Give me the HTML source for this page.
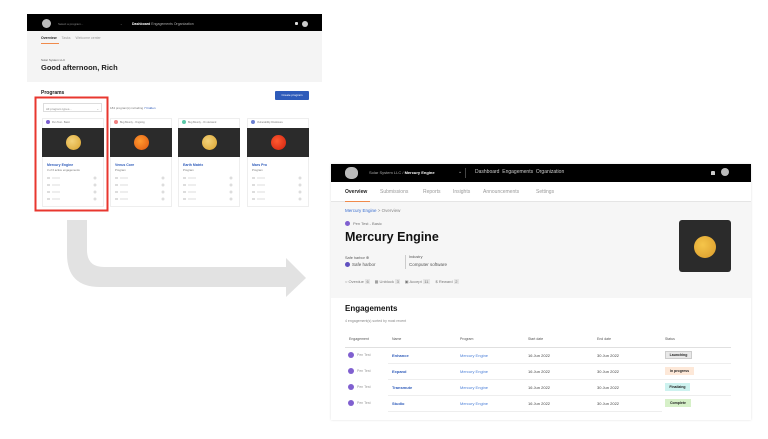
<!DOCTYPE html>
<html><head><style>
*{margin:0;padding:0;box-sizing:border-box}
body{width:768px;height:439px;background:#fff;position:relative;overflow:hidden;font-family:"Liberation Sans",sans-serif;color:#222}
.a{position:absolute;white-space:nowrap}
.t{font-size:3px;color:#777}
</style></head><body>
<div class="a" style="left:27px;top:14px;width:295px;height:200px;background:#fff"></div>
<div class="a" style="left:27px;top:14px;width:295px;height:17px;background:#000"></div>
<div class="a" style="left:42px;top:19px;width:9px;height:9px;border-radius:50%;background:#bbb"></div>
<div class="a t" style="left:58px;top:22px;color:#888">Select a program...</div>
<div class="a t" style="left:120px;top:22px;color:#888">⌄</div>
<div class="a" style="left:132px;top:22px;font-size:3.5px;color:#fff;font-weight:bold">Dashboard <span style="font-weight:normal;color:#aaa">Engagements Organization</span></div>
<div class="a" style="left:295px;top:22px;width:3px;height:3px;background:#ddd;border-radius:1px"></div>
<div class="a" style="left:302px;top:21px;width:6px;height:6px;border-radius:50%;background:#ccc"></div>
<div class="a" style="left:27px;top:31px;width:295px;height:51px;background:#f4f4f4"></div>
<div class="a" style="left:41px;top:36px;font-size:3.5px;font-weight:bold">Overview <span style="font-weight:normal;color:#999;margin-left:4px">Tasks</span><span style="font-weight:normal;color:#999;margin-left:5px">Welcome center</span></div>
<div class="a" style="left:41px;top:43px;width:18px;height:1px;background:#f08a4b"></div>
<div class="a t" style="left:41px;top:58px;color:#555">Solar System LLC</div>
<div class="a" style="left:41px;top:63px;font-size:7.5px;font-weight:bold;color:#222">Good afternoon, Rich</div>
<div class="a" style="left:41px;top:90px;font-size:5px;font-weight:bold">Programs</div>
<div class="a" style="left:275px;top:91px;width:34px;height:9px;background:#2e5bba;border-radius:1px;color:#fff;font-size:3px;text-align:center;line-height:9px">Create program</div>
<div class="a" style="left:43px;top:103px;width:59px;height:9px;border:0.5px solid #ddd;font-size:3px;color:#888;padding:3px 2px">All program types...<span style="float:right">⌄</span></div>
<div class="a t" style="left:110px;top:106px">184 program(s) including <span style="color:#2e5bba">7 hidden</span></div>

<div class="a" style="left:42px;top:118px;width:62px;height:89px;border:0.5px solid #eee"></div>
<div class="a" style="left:110px;top:118px;width:62px;height:89px;border:0.5px solid #eee"></div>
<div class="a" style="left:178px;top:118px;width:62px;height:89px;border:0.5px solid #eee"></div>
<div class="a" style="left:247px;top:118px;width:62px;height:89px;border:0.5px solid #eee"></div>

<div class="a" style="left:42px;top:128px;width:62px;height:29px;background:#2b2b2b"></div>
<div class="a" style="left:110px;top:128px;width:62px;height:29px;background:#2b2b2b"></div>
<div class="a" style="left:178px;top:128px;width:62px;height:29px;background:#2b2b2b"></div>
<div class="a" style="left:247px;top:128px;width:62px;height:29px;background:#2b2b2b"></div>
<div class="a" style="left:66px;top:135px;width:15px;height:15px;border-radius:50%;background:radial-gradient(circle at 40% 40%,#f3d27a,#d9a22d)"></div>
<div class="a" style="left:134px;top:135px;width:15px;height:15px;border-radius:50%;background:radial-gradient(circle at 40% 40%,#ff9a30,#e0560e)"></div>
<div class="a" style="left:202px;top:135px;width:15px;height:15px;border-radius:50%;background:radial-gradient(circle at 40% 40%,#f3d27a,#d9a22d)"></div>
<div class="a" style="left:271px;top:135px;width:15px;height:15px;border-radius:50%;background:radial-gradient(circle at 40% 40%,#ff5a30,#d0200e)"></div>

<div class="a" style="left:46px;top:120px;width:4px;height:4px;border-radius:50%;background:#7b5fd0"></div>
<div class="a" style="left:114px;top:120px;width:4px;height:4px;border-radius:50%;background:#f08080"></div>
<div class="a" style="left:182px;top:120px;width:4px;height:4px;border-radius:50%;background:#5cc8a8"></div>
<div class="a" style="left:251px;top:120px;width:4px;height:4px;border-radius:50%;background:#6b7fd0"></div>
<div class="a t" style="left:52px;top:121px;font-size:2.5px">Pen Test - Basic</div>
<div class="a t" style="left:120px;top:121px;font-size:2.5px">Bug Bounty - Ongoing</div>
<div class="a t" style="left:188px;top:121px;font-size:2.5px">Bug Bounty - On demand</div>
<div class="a t" style="left:257px;top:121px;font-size:2.5px">Vulnerability Disclosure</div>

<div class="a" style="left:47px;top:163px;font-size:3.5px;color:#2e5bba;font-weight:bold">Mercury Engine</div>
<div class="a" style="left:115px;top:163px;font-size:3.5px;color:#2e5bba;font-weight:bold">Venus Core</div>
<div class="a" style="left:183px;top:163px;font-size:3.5px;color:#2e5bba;font-weight:bold">Earth Matrix</div>
<div class="a" style="left:252px;top:163px;font-size:3.5px;color:#2e5bba;font-weight:bold">Mars Pro</div>
<div class="a t" style="left:47px;top:168px;font-size:2.8px">3 of 6 active engagements</div>
<div class="a t" style="left:115px;top:168px;font-size:2.8px">Program</div>
<div class="a t" style="left:183px;top:168px;font-size:2.8px">Program</div>
<div class="a t" style="left:252px;top:168px;font-size:2.8px">Program</div>

<svg class="a" style="left:0;top:0" width="768" height="439">
<g fill="#ddd">
<g id="r"><rect x="47" y="177" width="3" height="2"/><rect x="47" y="184" width="3" height="2"/><rect x="47" y="191" width="3" height="2"/><rect x="47" y="198" width="3" height="2"/>
<rect x="52" y="177.5" width="8" height="1"/><rect x="52" y="184.5" width="8" height="1"/><rect x="52" y="191.5" width="8" height="1"/><rect x="52" y="198.5" width="8" height="1"/>
<circle cx="95" cy="178" r="1.5"/><circle cx="95" cy="185" r="1.5"/><circle cx="95" cy="192" r="1.5"/><circle cx="95" cy="199" r="1.5"/></g>
<use href="#r" x="68"/><use href="#r" x="136"/><use href="#r" x="205"/>
</g>
<rect x="35.5" y="97.5" width="72" height="113" fill="none" stroke="#e8372f" stroke-width="2"/>
<path d="M67 220 H87 V250 Q87 267 104 267 H286 V258 L306 278 L286 297 V287 H100 Q67 287 67 254 Z" fill="#e2e2e2"/>
</svg>

<div class="a" style="left:331px;top:164px;width:420px;height:256px;background:#fff;box-shadow:0 0 2px #ddd"></div>
<div class="a" style="left:331px;top:164px;width:420px;height:18px;background:#000"></div>
<div class="a" style="left:345px;top:167px;width:13px;height:12px;border-radius:45%;background:#bbb"></div>
<div class="a" style="left:369px;top:170px;font-size:4px;color:#aaa">Solar System LLC / <b style="color:#fff">Mercury Engine</b></div>
<div class="a" style="left:458px;top:169px;font-size:5px;color:#aaa">⌄</div>
<div class="a" style="left:465px;top:168px;width:0.5px;height:10px;background:#444"></div>
<div class="a" style="left:475px;top:169px;font-size:5px;color:#ccc">Dashboard&nbsp; Engagements&nbsp; Organization</div>
<div class="a" style="left:711px;top:171px;width:4px;height:4px;background:#ccc;border-radius:1px 1px 0 0"></div>
<div class="a" style="left:721px;top:168px;width:8px;height:8px;border-radius:50%;background:#bbb"></div>
<div class="a" style="left:331px;top:182px;width:420px;height:20px;background:#fff;border-bottom:0.5px solid #e5e5e5"></div>
<div class="a" style="left:345px;top:189px;font-size:5px;font-weight:bold">Overview</div>
<div class="a" style="left:380px;top:189px;font-size:5px;color:#999">Submissions</div>
<div class="a" style="left:423px;top:189px;font-size:5px;color:#999">Reports</div>
<div class="a" style="left:453px;top:189px;font-size:5px;color:#999">Insights</div>
<div class="a" style="left:483px;top:189px;font-size:5px;color:#999">Announcements</div>
<div class="a" style="left:536px;top:189px;font-size:5px;color:#999">Settings</div>
<div class="a" style="left:345px;top:201px;width:25px;height:1.2px;background:#f08a4b"></div>
<div class="a" style="left:331px;top:202px;width:420px;height:96px;background:#f6f6f6"></div>
<div class="a" style="left:345px;top:208px;font-size:4.5px;color:#3b6fd0">Mercury Engine <span style="color:#888">&gt; Overview</span></div>
<div class="a" style="left:345px;top:221px;width:5px;height:5px;border-radius:50%;background:#8060d0"></div>
<div class="a" style="left:353px;top:221px;font-size:4px;color:#777">Pen Test - Basic</div>
<div class="a" style="left:345px;top:230px;font-size:12.5px;font-weight:bold;color:#111">Mercury Engine</div>
<div class="a" style="left:345px;top:255px;font-size:3.8px;color:#555">Safe harbor ⊕</div>
<div class="a" style="left:345px;top:262px;width:5px;height:5px;border-radius:50%;background:#6050c0"></div>
<div class="a" style="left:352px;top:262px;font-size:4.5px;color:#555">Safe harbor</div>
<div class="a" style="left:405px;top:255px;width:0.5px;height:14px;background:#ccc"></div>
<div class="a" style="left:409px;top:255px;font-size:3.8px;color:#555">Industry</div>
<div class="a" style="left:409px;top:262px;font-size:4.5px;color:#555">Computer software</div>
<div class="a" style="left:345px;top:279px;font-size:4px;color:#777">○ Overdue <span style="background:#e6e6e6;padding:0 1.5px">6</span>&nbsp;&nbsp;&nbsp; ▦ Unblock <span style="background:#e6e6e6;padding:0 1.5px">3</span>&nbsp;&nbsp;&nbsp; ▣ Accept <span style="background:#e6e6e6;padding:0 1.5px">11</span>&nbsp;&nbsp;&nbsp;&nbsp; $ Reward <span style="background:#e6e6e6;padding:0 1.5px">2</span></div>
<div class="a" style="left:679px;top:220px;width:52px;height:52px;border-radius:3px;background:#2b2b2b"></div>
<div class="a" style="left:694px;top:236px;width:22px;height:22px;border-radius:50%;background:radial-gradient(circle at 40% 40%,#f5c54a,#d99a2a)"></div>

<div class="a" style="left:345px;top:304px;font-size:8px;font-weight:bold;color:#111">Engagements</div>
<div class="a" style="left:345px;top:319px;font-size:3.5px;color:#888">4 engagement(s) sorted by most recent</div>
<div class="a" style="left:349px;top:337px;font-size:3.5px;color:#555">Engagement</div>
<div class="a" style="left:392px;top:337px;font-size:3.5px;color:#555">Name</div>
<div class="a" style="left:460px;top:337px;font-size:3.5px;color:#555">Program</div>
<div class="a" style="left:528px;top:337px;font-size:3.5px;color:#555">Start date</div>
<div class="a" style="left:597px;top:337px;font-size:3.5px;color:#555">End date</div>
<div class="a" style="left:665px;top:337px;font-size:3.5px;color:#555">Status</div>
<div class="a" style="left:345px;top:347px;width:386px;height:0.7px;background:#e0e0e0"></div>
<div class="a" style="left:388px;top:363px;width:343px;height:0.5px;background:#eee"></div>
<div class="a" style="left:388px;top:379px;width:343px;height:0.5px;background:#eee"></div>
<div class="a" style="left:388px;top:395px;width:343px;height:0.5px;background:#eee"></div>
<div class="a" style="left:388px;top:411px;width:274px;height:0.5px;background:#eee"></div>

<div class="a" style="left:348px;top:352px;width:6px;height:6px;border-radius:50%;background:#8060d0"></div>
<div class="a" style="left:348px;top:368px;width:6px;height:6px;border-radius:50%;background:#8060d0"></div>
<div class="a" style="left:348px;top:384px;width:6px;height:6px;border-radius:50%;background:#8060d0"></div>
<div class="a" style="left:348px;top:400px;width:6px;height:6px;border-radius:50%;background:#8060d0"></div>
<div class="a" style="left:357px;top:353px;font-size:3.5px;color:#999">Pen Test</div>
<div class="a" style="left:357px;top:369px;font-size:3.5px;color:#999">Pen Test</div>
<div class="a" style="left:357px;top:385px;font-size:3.5px;color:#999">Pen Test</div>
<div class="a" style="left:357px;top:401px;font-size:3.5px;color:#999">Pen Test</div>
<div class="a" style="left:392px;top:353px;font-size:4px;color:#2e5bba;font-weight:bold">Enhance</div>
<div class="a" style="left:392px;top:369px;font-size:4px;color:#2e5bba;font-weight:bold">Expand</div>
<div class="a" style="left:392px;top:385px;font-size:4px;color:#2e5bba;font-weight:bold">Transmute</div>
<div class="a" style="left:392px;top:401px;font-size:4px;color:#2e5bba;font-weight:bold">Studio</div>
<div class="a" style="left:460px;top:353px;font-size:4px;color:#4a7fd8">Mercury Engine</div>
<div class="a" style="left:460px;top:369px;font-size:4px;color:#4a7fd8">Mercury Engine</div>
<div class="a" style="left:460px;top:385px;font-size:4px;color:#4a7fd8">Mercury Engine</div>
<div class="a" style="left:460px;top:401px;font-size:4px;color:#4a7fd8">Mercury Engine</div>
<div class="a" style="left:528px;top:353px;font-size:4px;color:#444">16 Jun 2022</div>
<div class="a" style="left:528px;top:369px;font-size:4px;color:#444">16 Jun 2022</div>
<div class="a" style="left:528px;top:385px;font-size:4px;color:#444">16 Jun 2022</div>
<div class="a" style="left:528px;top:401px;font-size:4px;color:#444">16 Jun 2022</div>
<div class="a" style="left:597px;top:353px;font-size:4px;color:#444">30 Jun 2022</div>
<div class="a" style="left:597px;top:369px;font-size:4px;color:#444">30 Jun 2022</div>
<div class="a" style="left:597px;top:385px;font-size:4px;color:#444">30 Jun 2022</div>
<div class="a" style="left:597px;top:401px;font-size:4px;color:#444">30 Jun 2022</div>
<div class="a" style="left:665px;top:351px;width:27px;height:8px;background:#e8e8e8;border:0.5px solid #ccc;font-size:3.5px;font-weight:bold;text-align:center;line-height:7px">Launching</div>
<div class="a" style="left:665px;top:367px;width:29px;height:8px;background:#fde8d8;font-size:3.5px;font-weight:bold;text-align:center;line-height:8px">In progress</div>
<div class="a" style="left:665px;top:383px;width:25px;height:8px;background:#cdf2ef;font-size:3.5px;font-weight:bold;text-align:center;line-height:8px">Finalizing</div>
<div class="a" style="left:665px;top:399px;width:26px;height:8px;background:#d6f0c8;font-size:3.5px;font-weight:bold;text-align:center;line-height:8px">Complete</div>
</body></html>
